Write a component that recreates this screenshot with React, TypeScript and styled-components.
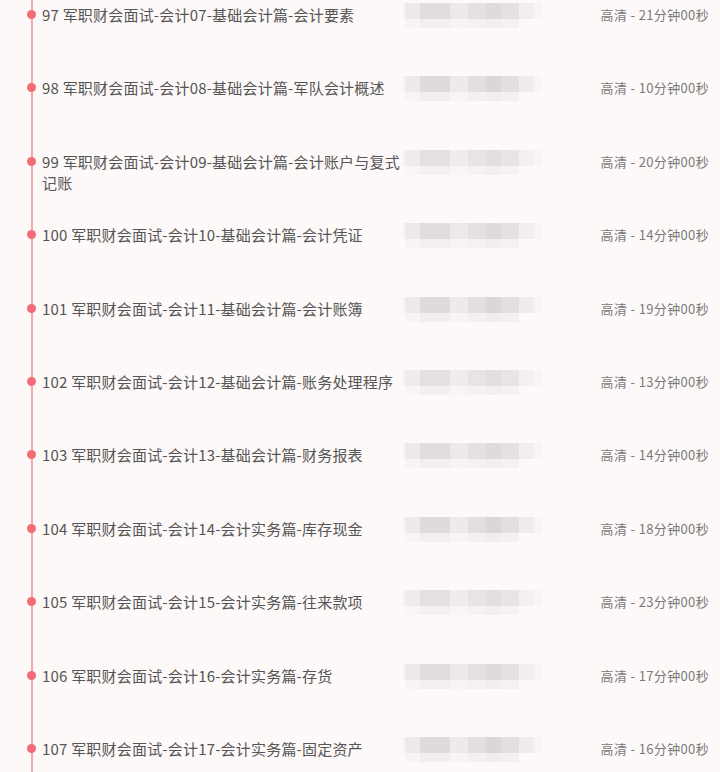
import React from 'react';
import styled, { createGlobalStyle } from 'styled-components';

const GlobalStyle = createGlobalStyle`
  html, body {
    margin: 0;
    padding: 0;
    background: #fdf9f8;
  }
  body {
    font-family: 'Noto Sans CJK SC', 'Noto Sans', sans-serif;
    overflow: hidden;
  }
`;

const Page = styled.div`
  width: 720px;
  height: 772px;
  overflow: hidden;
  background: #fdf9f8;
`;

const Timeline = styled.ul`
  list-style: none;
  margin: 0 0 0 31px;
  padding: 4px 11px 0 9px;
  border-left: 2px solid #f4a9ad;
  min-height: 900px;
`;

const Item = styled.li`
  position: relative;
  height: 73.4px;
  display: flex;
  align-items: flex-start;
`;

const Dot = styled.span`
  position: absolute;
  left: -15px;
  top: 6px;
  width: 9px;
  height: 9px;
  border-radius: 50%;
  background: #f26d75;
`;

const Title = styled.div`
  width: 360px;
  flex-shrink: 0;
  font-size: 15px;
  line-height: 21px;
  letter-spacing: 0.2px;
  color: #555;
`;

const Blur = styled.div`
  width: 140px;
  margin-top: -1px;
  display: flex;
  flex-direction: column;
  filter: blur(0.6px);
`;

const BlurStrip = styled.div<{ $height: number; $fade?: boolean }>`
  display: flex;
  height: ${({ $height }) => $height}px;
  opacity: ${({ $fade }) => ($fade ? 0.4 : 1)};
`;

const Cell = styled.span<{ $w: number; $tone: number }>`
  width: ${({ $w }) => $w}px;
  background: ${({ $tone }) => `rgb(${$tone}, ${$tone - 5}, ${$tone - 5})`};
`;

const Meta = styled.div`
  margin-left: auto;
  font-size: 13px;
  line-height: 21px;
  letter-spacing: 0.35px;
  color: #7a7a7a;
  white-space: nowrap;
`;

type Seg = [number, number];

const patterns: Seg[][] = [
  [[3, 250], [15, 238], [30, 226], [18, 238], [18, 230], [15, 224], [18, 230], [15, 243], [8, 249]],
  [[3, 250], [15, 239], [30, 224], [18, 239], [18, 228], [15, 220], [18, 228], [15, 241], [8, 249]],
  [[3, 250], [15, 241], [30, 229], [18, 241], [18, 233], [15, 227], [18, 233], [15, 245], [8, 250]],
];

const items = [
  { no: 97, title: '军职财会面试-会计07-基础会计篇-会计要素', time: '21' },
  { no: 98, title: '军职财会面试-会计08-基础会计篇-军队会计概述', time: '10' },
  { no: 99, title: '军职财会面试-会计09-基础会计篇-会计账户与复式记账', time: '20' },
  { no: 100, title: '军职财会面试-会计10-基础会计篇-会计凭证', time: '14' },
  { no: 101, title: '军职财会面试-会计11-基础会计篇-会计账簿', time: '19' },
  { no: 102, title: '军职财会面试-会计12-基础会计篇-账务处理程序', time: '13' },
  { no: 103, title: '军职财会面试-会计13-基础会计篇-财务报表', time: '14' },
  { no: 104, title: '军职财会面试-会计14-会计实务篇-库存现金', time: '18' },
  { no: 105, title: '军职财会面试-会计15-会计实务篇-往来款项', time: '23' },
  { no: 106, title: '军职财会面试-会计16-会计实务篇-存货', time: '17' },
  { no: 107, title: '军职财会面试-会计17-会计实务篇-固定资产', time: '16' },
];

const BlurredLink: React.FC<{ pattern: Seg[] }> = ({ pattern }) => (
  <Blur>
    <BlurStrip $height={16}>
      {pattern.map(([w, t], i) => (
        <Cell key={i} $w={w} $tone={t} />
      ))}
    </BlurStrip>
    <BlurStrip $height={9} $fade>
      {pattern.slice(0, 7).map(([w, t], i) => (
        <Cell key={i} $w={w} $tone={t + 4} />
      ))}
    </BlurStrip>
  </Blur>
);

export default function App() {
  return (
    <Page>
      <GlobalStyle />
      <Timeline>
        {items.map((item, i) => (
          <Item key={item.no}>
            <Dot />
            <Title>
              {item.no} {item.title}
            </Title>
            <BlurredLink pattern={patterns[i % patterns.length]} />
            <Meta>高清 - {item.time}分钟00秒</Meta>
          </Item>
        ))}
      </Timeline>
    </Page>
  );
}
